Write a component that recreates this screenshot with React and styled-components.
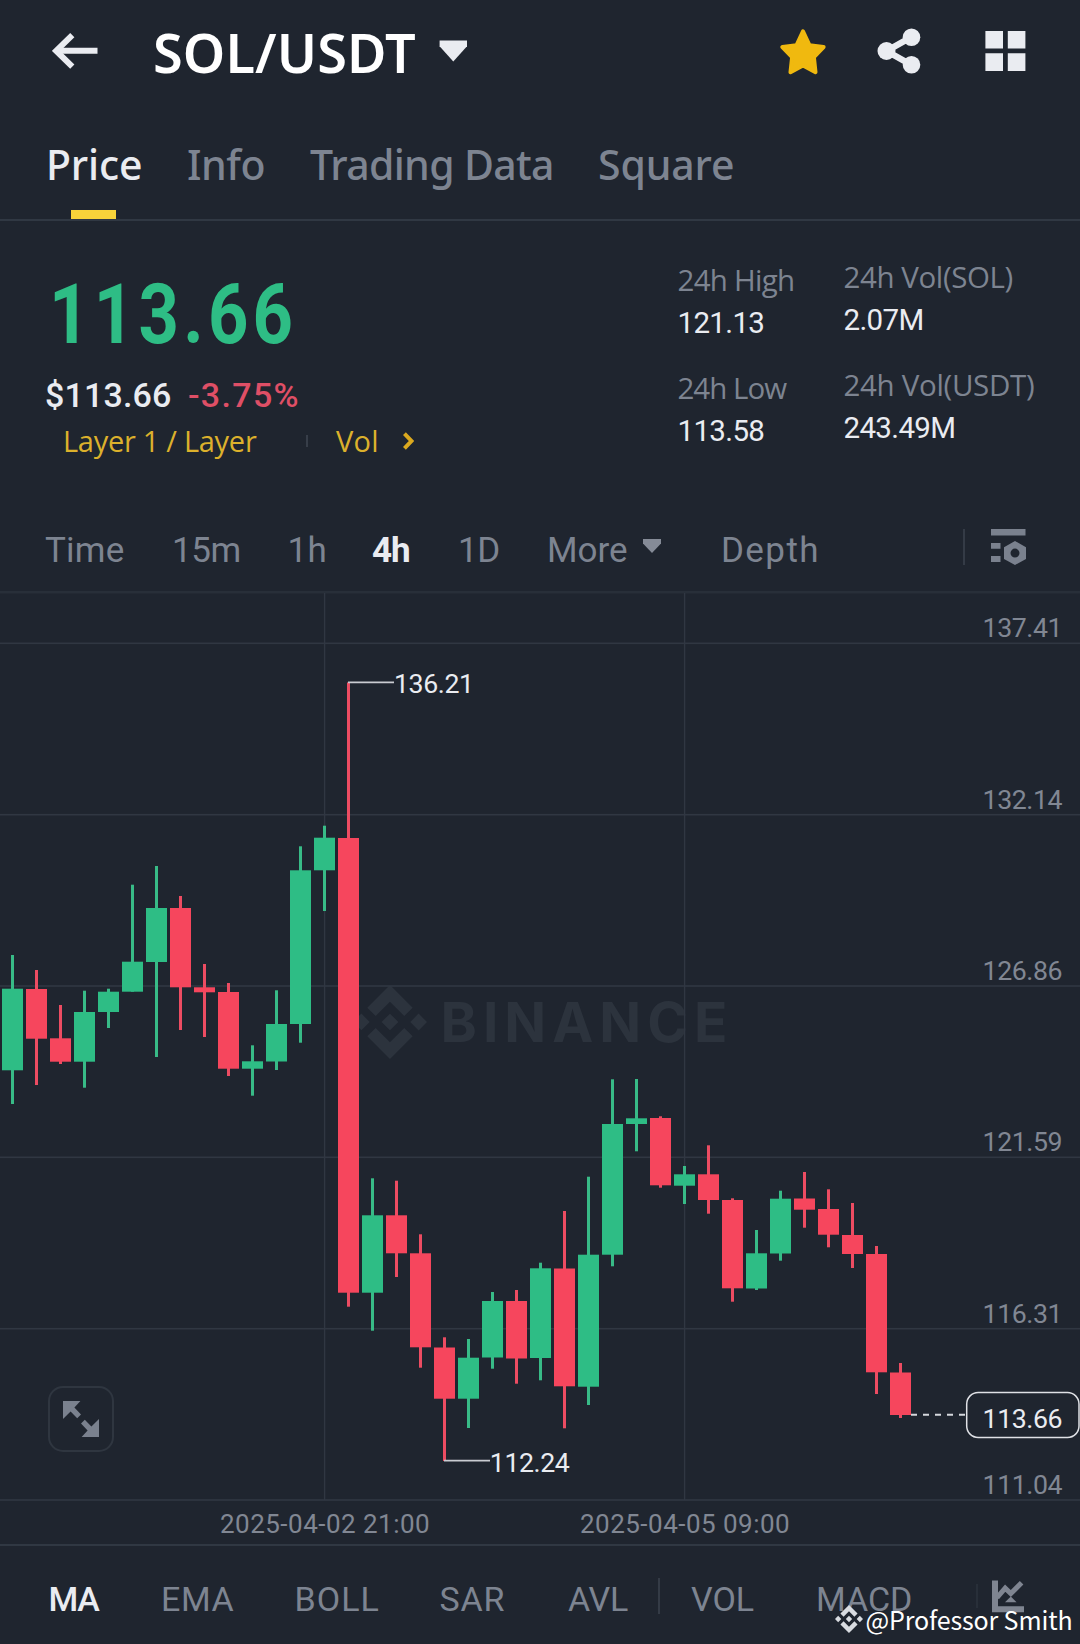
import React from "react";
import styled, { createGlobalStyle } from "styled-components";
import { SiBinance } from "react-icons/si";

const COLORS = {
  bg: "#1f252f",
  line: "#303742",
  faint: "#282f39",
  text: "#eaecf1",
  muted: "#7d8491",
  green: "#2ebd85",
  red: "#f6465d",
  greenWick: "#38bb87",
  redWick: "#ec4c62",
  yellow: "#f0b90f",
};

const SANS = '"Noto Sans", "Open Sans", sans-serif';
const LABEL = '"Open Sans", "Noto Sans", sans-serif';
const DIGITS = 'Roboto, "Liberation Sans", sans-serif';

const TABS = [
  { label: "Price", active: true, track: -0.14 },
  { label: "Info", track: -0.45 },
  { label: "Trading Data", track: -0.67 },
  { label: "Square", track: -0.15 },
];

const STATS = [
  [
    { label: "24h High", value: "121.13", track: -0.74 },
    { label: "24h Low", value: "113.58", track: -1 },
  ],
  [
    { label: "24h Vol(SOL)", value: "2.07M", track: -0.41 },
    { label: "24h Vol(USDT)", value: "243.49M", track: -0.32 },
  ],
];

// chart space: x 0-1080, y 591-1544
const CHART_TOP = 591;
const CHART_HEIGHT = 953;
const STEP = 24;

const PRICE_LINES = [
  { y: 643.3, label: "137.41" },
  { y: 814.7, label: "132.14" },
  { y: 986, label: "126.86" },
  { y: 1157.3, label: "121.59" },
  { y: 1328.7, label: "116.31" },
  { y: 1500, label: "111.04" },
];

const TIME_LINES = [
  { x: 324.6, label: "2025-04-02 21:00" },
  { x: 684.6, label: "2025-04-05 09:00" },
];

// [up, wick top, wick bottom, body top, body bottom]
const CANDLES = [
  [1, 955, 1104, 988.7, 1070.3],
  [0, 970, 1085, 989, 1038.7],
  [0, 1005, 1064, 1038.3, 1061.7],
  [1, 990.7, 1087.7, 1012, 1061.7],
  [1, 988.7, 1028, 991.7, 1012],
  [1, 884.7, 991.7, 961.7, 991.7],
  [1, 866, 1057, 908, 962],
  [0, 896, 1030, 908, 987.3],
  [0, 964, 1037, 987.3, 992.3],
  [0, 983, 1076, 992, 1068.7],
  [1, 1045.3, 1095.7, 1061.3, 1068.7],
  [1, 990.3, 1070, 1024, 1061.5],
  [1, 846.3, 1042.7, 870.3, 1024],
  [1, 825.7, 911, 837.7, 870.3],
  [0, 682.5, 1306.7, 838, 1292.7],
  [1, 1178.3, 1330.7, 1215.3, 1292.7],
  [0, 1180.7, 1277, 1215.3, 1253.3],
  [0, 1234.3, 1367.7, 1253.3, 1347.3],
  [0, 1337.3, 1461, 1347.5, 1398.7],
  [1, 1339, 1428, 1357.7, 1398.7],
  [1, 1292, 1368.7, 1301, 1357.5],
  [0, 1290, 1383.7, 1301, 1358.5],
  [1, 1262.7, 1380.3, 1268.3, 1358],
  [0, 1211, 1428.3, 1268.5, 1386.3],
  [1, 1176.7, 1405, 1254.7, 1386.7],
  [1, 1079.3, 1266.3, 1124, 1254.7],
  [1, 1079, 1151.3, 1118.3, 1124],
  [0, 1116.3, 1187.7, 1118, 1185.3],
  [1, 1166, 1204, 1174.3, 1185.7],
  [0, 1145.3, 1213.7, 1174.3, 1200],
  [0, 1198.3, 1301.7, 1200, 1288.3],
  [1, 1230, 1290, 1253.3, 1288.5],
  [1, 1190.7, 1260.7, 1198.7, 1253.5],
  [0, 1172, 1227.7, 1198.5, 1209.7],
  [0, 1189.3, 1247.3, 1209, 1234.7],
  [0, 1203, 1268, 1235, 1254],
  [0, 1246, 1394, 1254, 1372.3],
  [0, 1363, 1418, 1372.5, 1415],
];

export default function App() {
  return (
    <>
      <GlobalStyle />
      <Screen>
        <Header />
        <Tabs>
          {TABS.map((tab) => (
            <Tab key={tab.label} $active={tab.active}>
              <TabLabel $track={tab.track}>{tab.label}</TabLabel>
              {tab.active && <TabIndicator />}
            </Tab>
          ))}
        </Tabs>
        <Summary />
        <IntervalBar />
        <ChartArea>
          <CandleChart />
          <FullscreenButton aria-label="Fullscreen">
            <svg width="36" height="36" viewBox="0 0 36 36" fill="#7a818e">
              <path d="M0 0H17.4L11.4 6.6L18 13.6L14.2 17.2L7.6 10.4L0 18Z" />
              <path d="M36 36H18.6L24.6 29.4L18 22.4L21.8 18.8L28.4 25.6L36 18Z" />
            </svg>
          </FullscreenButton>
        </ChartArea>
        <IndicatorBar />
        <Signature>
          <SiBinance size={28} color="#d9dce1" />
          <span>@Professor Smith</span>
        </Signature>
      </Screen>
    </>
  );
}

function Header() {
  return (
    <HeaderBar>
      <svg width="46" height="36" viewBox="0 0 46 36" fill="none" stroke={COLORS.text} strokeWidth="6">
        <path d="M4 17.8H45.5" />
        <path d="M20.3 2.2L4.2 17.8L20.3 33.6" />
      </svg>
      <Pair>SOL/USDT</Pair>
      <svg width="29" height="22" viewBox="0 0 29 22" fill={COLORS.text}>
        <path d="M0.6 0.5H28V6.2L14.3 21.5L0.6 6.2Z" />
      </svg>
      <HeaderActions>
        <StarIcon width="46" height="48" viewBox="0 0 46 48">
          <path d="M23 3.4L29.4 17.2L43.6 19L33.9 29.2L35.5 44.2L23 37.6L10.5 44.2L12.1 29.2L2.4 19L16.6 17.2Z" />
        </StarIcon>
        <ShareIcon width="44" height="46" viewBox="0 0 44 46" fill={COLORS.text}>
          <path d="M9.5 23L34.5 9M9.5 23L34.5 37" stroke={COLORS.text} strokeWidth="6.5" />
          <circle cx="9.5" cy="23" r="9" />
          <circle cx="34.5" cy="9.3" r="8.8" />
          <circle cx="34.5" cy="36.8" r="8.8" />
        </ShareIcon>
        <svg width="41" height="40" viewBox="0 0 41 40" fill={COLORS.text}>
          <path d="M0.4 0H18V17.6H0.4ZM22.8 0H40.4V17.6H22.8ZM0.4 22.2H18V40H0.4ZM22.8 22.2H40.4V40H22.8Z" />
        </svg>
      </HeaderActions>
    </HeaderBar>
  );
}

function Summary() {
  return (
    <SummarySection>
      <Quote>
        <LastPrice>113.66</LastPrice>
        <FiatRow>
          <Fiat>$113.66</Fiat>
          <Change>-3.75%</Change>
        </FiatRow>
        <TagRow>
          <Tag $track={-0.28}>Layer 1 / Layer</Tag>
          <TagDivider />
          <Tag $track={0.3}>Vol</Tag>
          <svg width="11" height="18" viewBox="0 0 11 18" fill="none" stroke="#dba91f" strokeWidth="4">
            <path d="M1.4 1.6L8.4 9L1.4 16.4" />
          </svg>
        </TagRow>
      </Quote>
      {STATS.map((column, i) => (
        <StatColumn key={i} $raised={i === 1}>
          {column.map((stat) => (
            <Stat key={stat.label}>
              <StatLabel $track={stat.track}>{stat.label}</StatLabel>
              <StatValue>{stat.value}</StatValue>
            </Stat>
          ))}
        </StatColumn>
      ))}
    </SummarySection>
  );
}

function IntervalBar() {
  return (
    <Intervals>
      <Interval $track={0.2}>Time</Interval>
      <Interval $track={-0.4}>15m</Interval>
      <Interval $track={0.33}>1h</Interval>
      <Interval $active $track={-1}>4h</Interval>
      <Interval $track={-0.4}>1D</Interval>
      <Interval>
        More
        <MoreCaret width="18" height="14" viewBox="0 0 18 14">
          <path d="M0 0H18V4.5L9 14L0 4.5Z" />
        </MoreCaret>
      </Interval>
      <Interval $track={1.4}>Depth</Interval>
      <IntervalSettings>
        <Divider $height={36} />
        <svg width="35" height="37" viewBox="0 0 35 37" fill="#7a818e">
          <path d="M0 0H34.5V6.5H0ZM0 14H9.5V19.8H0ZM0 27H9.5V33H0Z" />
          <path
            fillRule="evenodd"
            d="M24 12L35 18.2V30L24 36L13 30V18.2ZM24 19.6A4.5 4.5 0 1 0 24 28.6A4.5 4.5 0 1 0 24 19.6Z"
          />
        </svg>
      </IntervalSettings>
    </Intervals>
  );
}

function CandleChart() {
  return (
    <ChartSvg viewBox={`0 ${CHART_TOP} 1080 ${CHART_HEIGHT}`}>
      <SiBinance x="353" y="985" size={74} color="#2c333d" />
      <Watermark x="440.5" y="1042">BINANCE</Watermark>

      <rect x="0" y="591" width="1080" height="2.5" fill={COLORS.faint} />
      {PRICE_LINES.map((line) => (
        <rect key={line.label} x="0" y={line.y - 0.8} width="1080" height="1.6" fill={COLORS.line} />
      ))}
      {TIME_LINES.map((line) => (
        <rect key={line.label} x={line.x - 0.7} y="593" width="1.4" height="907" fill={COLORS.line} />
      ))}

      {CANDLES.map(([up, high, low, top, bottom], i) => (
        <g key={i}>
          <rect x={i * STEP + 11} y={high} width="3" height={low - high} fill={up ? COLORS.greenWick : COLORS.redWick} />
          <rect x={i * STEP + 2} y={top} width="21" height={bottom - top} fill={up ? COLORS.green : COLORS.red} />
        </g>
      ))}

      <path d="M348 682.3H394M444 1460.7H490" stroke="#c9ccd2" strokeWidth="1.8" />
      <ChartText x="394" y="692.7" $bright>136.21</ChartText>
      <ChartText x="489.8" y="1471.7" $bright>112.24</ChartText>

      {PRICE_LINES.map((line) => (
        <ChartText key={line.label} x="982.6" y={line.y - 6}>{line.label}</ChartText>
      ))}

      <path d="M911 1414.8H966" stroke="#d5d8dd" strokeWidth="2" strokeDasharray="6 6" />
      <rect x="966.7" y="1392.5" width="112.3" height="45" rx="11.5" fill={COLORS.bg} stroke="#dfe1e6" strokeWidth="1.5" />
      <ChartText x="982.6" y="1428" $bright>113.66</ChartText>

      {TIME_LINES.map((line) => (
        <DateText key={line.label} x={line.x - 104.6} y="1532.7">{line.label}</DateText>
      ))}
    </ChartSvg>
  );
}

function IndicatorBar() {
  return (
    <Indicators>
      <Indicator $active $track={-1.2}>MA</Indicator>
      <Indicator $track={0.6}>EMA</Indicator>
      <Indicator $track={1.04}>BOLL</Indicator>
      <Indicator $track={0.82}>SAR</Indicator>
      <Indicator $track={-0.19}>AVL</Indicator>
      <Divider $height={36} />
      <Indicator>VOL</Indicator>
      <Indicator>MACD</Indicator>
      <Divider $height={24} $faint />
      <svg width="33" height="33" viewBox="0 0 33 33" fill="#7f8591">
        <path d="M0 0.5H6V26.3H32V32.3H0Z" />
        <path d="M5 17.6L13.2 8.2L18.8 13.6L29.6 2.8" fill="none" stroke="#7f8591" strokeWidth="5" />
        <path d="M18.8 16.6L24.6 22.2H13Z" />
      </svg>
    </Indicators>
  );
}

const GlobalStyle = createGlobalStyle`
  * {
    box-sizing: border-box;
  }

  body {
    margin: 0;
    background: ${COLORS.bg};
  }

  svg {
    display: block;
    flex: none;
  }
`;

const Screen = styled.div`
  position: relative;
  width: 1080px;
  height: 1644px;
  overflow: hidden;
  color: ${COLORS.text};
  background: ${COLORS.bg};
  font-family: ${DIGITS};
`;

const HeaderBar = styled.header`
  display: flex;
  align-items: center;
  height: 102px;
  padding: 0 54.5px 0 51.5px;
`;

const Pair = styled.h1`
  margin: 1px 23.5px 0 55.5px;
  color: #fff;
  font: 600 54px/60px ${SANS};
  letter-spacing: 0.12px;
`;

const HeaderActions = styled.div`
  display: flex;
  align-items: center;
  margin-left: auto;
`;

const StarIcon = styled.svg`
  margin-top: 1px;
  fill: ${COLORS.yellow};
  stroke: ${COLORS.yellow};
  stroke-width: 4px;
  stroke-linejoin: round;
`;

const ShareIcon = styled.svg`
  margin: 0 64px 0 51px;
`;

const Tabs = styled.nav`
  display: grid;
  grid-template-columns: 141px 123px 288px auto;
  height: 119px;
  padding-left: 46px;
  border-bottom: 2px solid #303843;
`;

const Tab = styled.div`
  display: flex;
  flex-direction: column;
  justify-content: space-between;
  padding-top: 37px;
  color: ${({ $active }) => ($active ? COLORS.text : COLORS.muted)};
`;

const TabLabel = styled.span`
  font: 500 41px/50px ${SANS};
  letter-spacing: ${({ $track }) => $track}px;
`;

const TabIndicator = styled.div`
  width: 45px;
  height: 9px;
  margin-left: 25px;
  background: #f8d33a;
`;

const SummarySection = styled.section`
  display: grid;
  grid-template-columns: 632.5px 166px auto;
  height: 289px;
  padding: 41px 0 0 45px;
`;

const Quote = styled.div`
  padding-top: 7.6px;
`;

const LastPrice = styled.div`
  margin-left: 3.5px;
  color: ${COLORS.green};
  font-size: 83px;
  font-weight: 700;
  line-height: 90px;
  letter-spacing: 5px;
  transform: scaleX(0.85);
  transform-origin: left;
`;

const FiatRow = styled.div`
  display: flex;
  margin: 13px 0 6.6px;
  font-size: 34px;
  font-weight: 500;
  line-height: 44px;
`;

const Fiat = styled.span`
  width: 143px;
  letter-spacing: 0.16px;
`;

const Change = styled.span`
  color: #df4f66;
  letter-spacing: 1.31px;
`;

const TagRow = styled.div`
  display: flex;
  align-items: center;
  padding-left: 18px;
`;

const Tag = styled.span`
  margin-right: 24px;
  color: #dcb12c;
  font: 400 29px/36px ${LABEL};
  letter-spacing: ${({ $track }) => $track}px;
`;

const TagDivider = styled.div`
  width: 2px;
  height: 12px;
  margin: 0 27.5px 0 26px;
  background: #373e49;
`;

const StatColumn = styled.div`
  display: flex;
  flex-direction: column;
  gap: 28.7px;
  margin-top: ${({ $raised }) => ($raised ? -3 : 0)}px;
`;

const Stat = styled.div`
  display: flex;
  flex-direction: column;
  gap: 7px;
`;

const StatLabel = styled.span`
  color: ${COLORS.muted};
  font: 400 29.5px/36px ${LABEL};
  letter-spacing: ${({ $track }) => $track}px;
`;

const StatValue = styled.span`
  font-size: 29.5px;
  line-height: 36px;
  letter-spacing: -0.65px;
`;

const Intervals = styled.nav`
  display: grid;
  grid-template-columns: 127px 115.5px 84.5px 86px 89px 174px auto 117px;
  align-items: center;
  height: 81px;
  padding-left: 45px;
`;

const Interval = styled.div`
  display: flex;
  align-items: center;
  gap: 15px;
  color: ${({ $active }) => ($active ? COLORS.text : COLORS.muted)};
  font-size: 35px;
  font-weight: ${({ $active }) => ($active ? 700 : 400)};
  line-height: 44px;
  letter-spacing: ${({ $track = 0 }) => $track}px;
`;

const MoreCaret = styled.svg`
  margin-bottom: 9px;
  fill: #858b97;
`;

const IntervalSettings = styled.div`
  display: flex;
  align-items: center;
  gap: 25.5px;
  margin-bottom: 6.5px;
`;

const Divider = styled.div`
  width: 2px;
  height: ${({ $height }) => $height}px;
  background: ${({ $faint }) => ($faint ? COLORS.faint : "#343b46")};
`;

const ChartArea = styled.section`
  position: relative;
  height: ${CHART_HEIGHT}px;
`;

const ChartSvg = styled.svg`
  width: 1080px;
  height: ${CHART_HEIGHT}px;
`;

const Watermark = styled.text`
  fill: #2c333d;
  font: 700 55px Inter, sans-serif;
  letter-spacing: 6px;
`;

const ChartText = styled.text`
  fill: ${({ $bright }) => ($bright ? COLORS.text : "#818793")};
  font-size: 26.7px;
  letter-spacing: -0.41px;
`;

const DateText = styled.text`
  fill: #818793;
  font-size: 26px;
  letter-spacing: 0.48px;
`;

/* floats over the lower left corner of the chart */
const FullscreenButton = styled.button`
  position: absolute;
  left: 48px;
  bottom: 92px;
  display: flex;
  align-items: center;
  justify-content: center;
  width: 66px;
  height: 66px;
  padding: 0;
  background: transparent;
  border: 2.5px solid #2f3640;
  border-radius: 15px;
`;

const Indicators = styled.nav`
  display: grid;
  grid-template-columns: 112.5px 133.5px 145px 128.5px 90px 33px 125px 160px 16px auto;
  align-items: center;
  height: 99px;
  padding: 3px 0 0 48.5px;
  border-top: 2px solid #303843;
`;

const Indicator = styled.span`
  padding-top: 6px;
  color: ${({ $active }) => ($active ? COLORS.text : COLORS.muted)};
  font-size: 34px;
  font-weight: ${({ $active }) => ($active ? 500 : 400)};
  line-height: 44px;
  letter-spacing: ${({ $track = 0 }) => $track}px;
`;

const Signature = styled.div`
  position: absolute;
  right: 7.5px;
  bottom: 7.5px;
  display: flex;
  align-items: center;
  gap: 2.5px;
  color: #fff;
  font: 400 25px/36px "Noto Sans CJK SC", sans-serif;
  letter-spacing: -0.13px;
  white-space: nowrap;
`;
